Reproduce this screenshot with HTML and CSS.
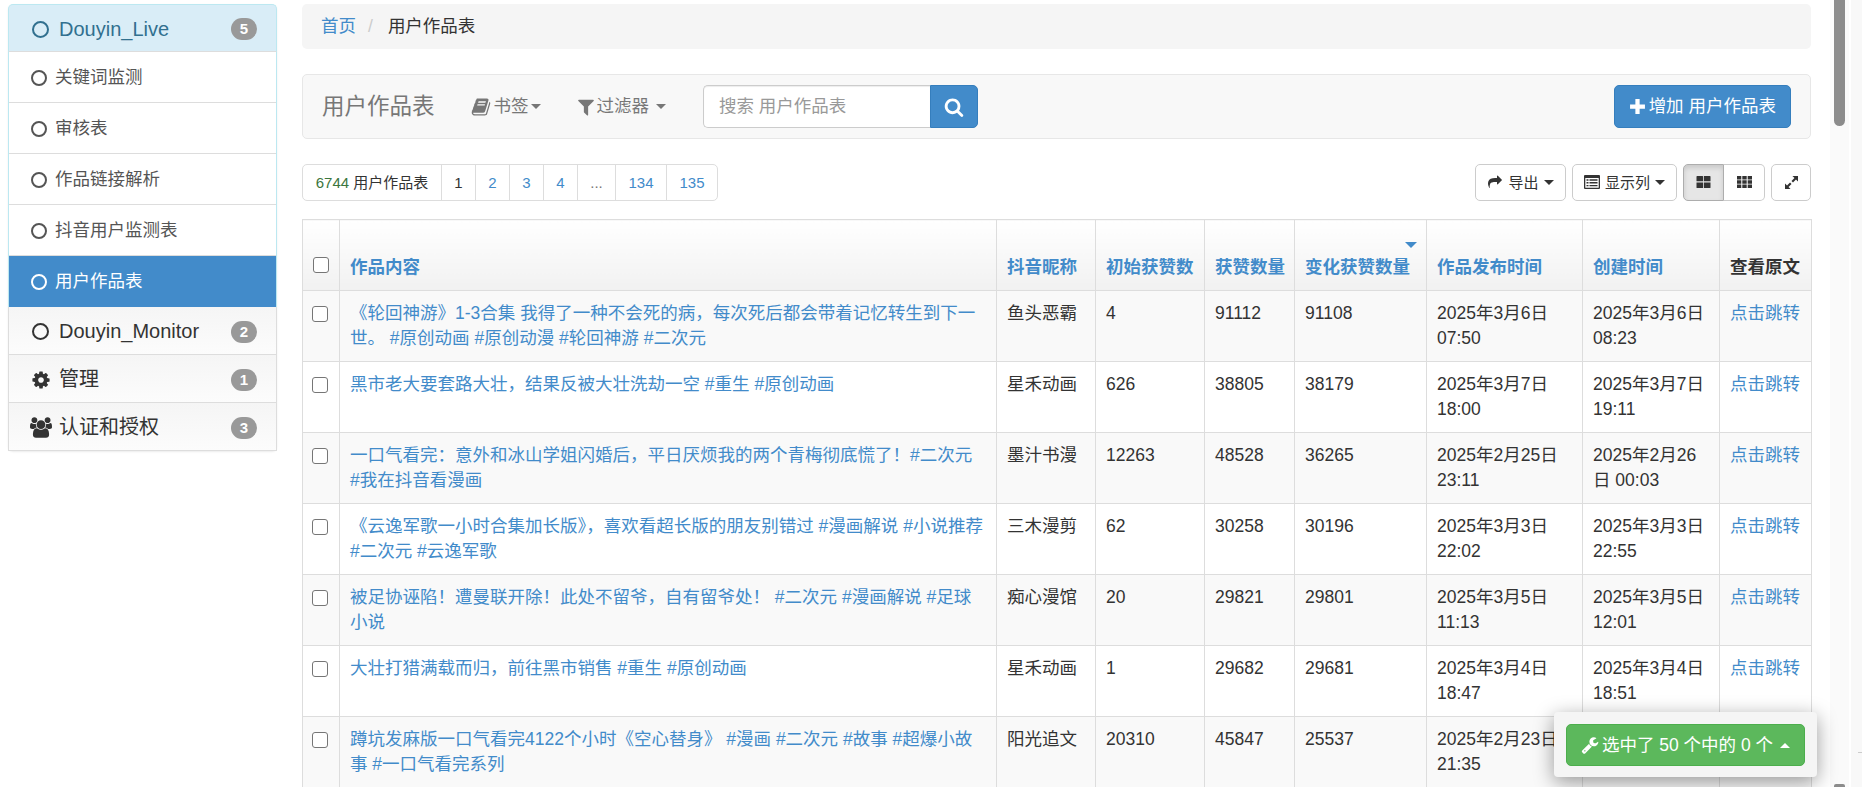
FILE: index.html
```html
<!DOCTYPE html>
<html lang="zh">
<head>
<meta charset="utf-8">
<title>用户作品表</title>
<link rel="stylesheet" href="styles.css">
</head>
<body>
<svg class="defs" width="0" height="0" aria-hidden="true">
  <symbol id="i-cog" viewBox="0 0 1792 1792"><path d="M1152 896q0-106-75-181t-181-75-181 75-75 181 75 181 181 75 181-75 75-181zm512-109v222q0 12-8 23t-20 13l-185 28q-19 54-39 91 35 50 107 138 10 12 10 25t-9 23q-27 37-99 108t-94 71q-12 0-26-9l-138-108q-44 23-91 38-16 136-29 186-7 28-36 28h-222q-14 0-24.5-8.5t-11.5-21.5l-28-184q-49-16-90-37l-141 107q-10 9-25 9-14 0-25-11-126-114-165-168-7-10-7-23 0-12 8-23 15-21 51-66.5t54-70.5q-27-50-41-99l-183-27q-13-2-21-12.5t-8-23.5v-222q0-12 8-23t19-13l186-28q14-46 39-92-40-57-107-138-10-12-10-24 0-10 9-23 26-36 98.5-107.5t94.5-71.5q13 0 26 10l138 107q44-23 91-38 16-136 29-186 7-28 36-28h222q14 0 24.5 8.5t11.5 21.5l28 184q49 16 90 37l142-107q9-9 24-9 13 0 25 10 129 119 165 170 7 8 7 22 0 12-8 23-15 21-51 66.5t-54 70.5q26 50 41 98l183 28q13 2 21 12.5t8 23.5z"/></symbol>
  <symbol id="i-users" viewBox="0 0 1920 1792"><path d="M593 896q-162 5-265 128h-134q-82 0-138-40.500t-56-118.500q0-353 124-353 6 0 43.500 21t97.500 42.500 119 21.500q67 0 133-23-5 37-5 66 0 139 81 256zm1071 637q0 120-73 189.500t-194 69.500h-874q-121 0-194-69.500t-73-189.500q0-53 3.500-103.500t14-109 26.500-108.500 43-97.500 62-81 85.500-53.500 111.500-20q10 0 43 21.500t73 48 107 48 135 21.500 135-21.500 107-48 73-48 43-21.500q61 0 111.500 20t85.500 53.500 62 81 43 97.500 26.500 108.500 14 109 3.500 103.500zm-1024-1277q0 106-75 181t-181 75-181-75-75-181 75-181 181-75 181 75 75 181zm704 384q0 159-112.500 271.500t-271.500 112.500-271.500-112.500-112.500-271.500 112.500-271.500 271.500-112.500 271.500 112.500 112.500 271.500zm576 225q0 78-56 118.500t-138 40.500h-134q-103-123-265-128 81-117 81-256 0-29-5-66 66 23 133 23 59 0 119-21.500t97.500-42.500 43.500-21q124 0 124 353zm-128-609q0 106-75 181t-181 75-181-75-75-181 75-181 181-75 181 75 75 181z"/></symbol>
  <symbol id="i-search" viewBox="0 0 1792 1792"><path d="M1216 832q0-185-131.500-316.500t-316.500-131.500-316.500 131.500-131.500 316.500 131.500 316.500 316.500 131.500 316.500-131.500 131.500-316.500zm512 832q0 52-38 90t-90 38q-54 0-90-38l-343-342q-179 124-399 124-143 0-273.500-55.500t-225-150-150-225-55.500-273.500 55.500-273.500 150-225 225-150 273.500-55.500 273.500 55.500 225 150 150 225 55.500 273.500q0 220-124 399l343 343q37 37 37 90z"/></symbol>
  <symbol id="i-filter" viewBox="0 0 1792 1792"><path d="M1595 295q17 41-14 70l-493 493v742q0 42-39 59-13 5-25 5-27 0-45-19l-256-256q-19-19-19-45v-486l-493-493q-31-29-14-70 17-39 59-39h1280q42 0 59 39z"/></symbol>
  <symbol id="i-wrench" viewBox="0 0 1792 1792"><path d="M448 1472q0-26-19-45t-45-19-45 19-19 45 19 45 45 19 45-19 19-45zm644-420l-682 682q-37 37-90 37-52 0-91-37l-106-108q-38-36-38-90 0-53 38-91l681-681q39 98 114.500 173.500t173.500 114.500zm634-435q0 39-23 106-47 134-164.500 217.500t-258.500 83.500q-185 0-316.500-131.500t-131.500-316.500 131.500-316.500 316.500-131.500q58 0 121.500 16.500t107.500 46.500q16 11 16 28t-16 28l-293 169v224l193 107q5-3 79-48.500t135.500-81 70.500-35.500q15 0 23.500 10t8.500 25z"/></symbol>
  <symbol id="i-book" viewBox="0 0 1792 1792"><path d="M1703 478q40 57 18 129l-275 906q-19 64-76.500 107.500t-122.500 43.500h-923q-77 0-148.500-53.500t-99.500-131.500q-24-67-2-127 0-4 3-27t4-37q1-8-3-21.500t-3-19.500q2-11 8-21t16.500-23.500 16.500-23.500q23-38 45-91.500t30-91.500q3-10 .5-30t-.5-28q3-11 17-28t17-23q21-36 42-92t25-90q1-9-2.500-32t.5-28q4-13 22-30.500t22-22.500q19-26 42.500-84.500t27.500-96.500q1-8-3-25.500t-2-26.500q2-8 9-18t18-23 17-21q8-12 16.500-30.500t15-35 16-36 19.500-32 26.500-23.500 36-11.500 47.500 5.500l-1 3q38-9 51-9h761q74 0 114 56t18 130l-274 906q-36 119-71.500 153.500t-128.500 34.500h-869q-27 0-38 15-11 16-1 43 24 70 144 70h923q29 0 56-15.500t35-41.500l300-987q7-22 5-57 38 15 59 43zm-1064 2q-4 13 2 22.500t20 9.500h608q13 0 25.500-9.500t16.500-22.500l21-64q4-13-2-22.500t-20-9.500h-608q-13 0-25.500 9.500t-16.500 22.500zm-83 256q-4 13 2 22.500t20 9.500h608q13 0 25.500-9.500t16.500-22.500l21-64q4-13-2-22.500t-20-9.500h-608q-13 0-25.500 9.500t-16.500 22.500z"/></symbol>
  <symbol id="i-share" viewBox="0 0 1792 1792"><path d="M1792 640q0 26-19 45l-512 512q-19 19-45 19t-45-19-19-45v-256h-224q-98 0-175.500 6t-154 21.500-133 42.500-105.500 69.500-80 101-48.500 138.500-17.500 181q0 55 5 123 0 6 2.500 23.500t2.500 26.500q0 15-8.500 25t-23.500 10q-16 0-28-17-7-9-13-22t-13.500-30-10.500-24q-127-285-127-451 0-199 53-333 162-403 875-403h224v-256q0-26 19-45t45-19 45 19l512 512q19 19 19 45z"/></symbol>
  <symbol id="i-plus" viewBox="0 0 16 16"><path d="M6 1h4v5h5v4h-5v5H6v-5H1V6h5z"/></symbol>
  <symbol id="i-list" viewBox="0 0 16 14"><path fill-rule="evenodd" d="M1 0h14a1 1 0 0 1 1 1v12a1 1 0 0 1-1 1H1a1 1 0 0 1-1-1V1a1 1 0 0 1 1-1zm.3 3v9.700h13.400V3zM2.500 4.300h2v1.400h-2zm3 0h8v1.400h-8zm-3 2.800h2v1.400h-2zm3 0h8v1.400h-8zm-3 2.800h2v1.400h-2zm3 0h8v1.400h-8z"/></symbol>
  <symbol id="i-large" viewBox="0 0 14 12"><path d="M0 .6C0 .3.300 0 .6 0h5.400c.3 0 .6.300.6.600v4.600H0zM7.400 0H13.400c.3 0 .6.300.6.600v4.600H7.400zM0 6.600h6.600v4.800c0 .3-.3.600-.6.600H.6c-.3 0-.6-.3-.6-.6zM7.400 6.600H14v4.800c0 .3-.3.600-.6.600H7.400z"/></symbol>
  <symbol id="i-th" viewBox="0 0 15 12"><path d="M0 0h4.300v3.400H0zM5.300 0h4.400v3.400H5.300zM10.700 0H15v3.400h-4.300zM0 4.300h4.300v3.400H0zM5.300 4.300h4.400v3.400H5.300zM10.700 4.300H15v3.400h-4.300zM0 8.600h4.300V12H0zM5.300 8.600h4.400V12H5.300zM10.700 8.600H15V12h-4.300z"/></symbol>
  <symbol id="i-expand" viewBox="0 0 14 14"><path d="M8 0h6v6l-2.200-2.200L8.600 7 7 5.400l3.200-3.200zM5.400 7 7 8.600l-3.200 3.200L6 14H0V8l2.200 2.200z"/></symbol>
</svg>

<div class="page">
  <aside class="sidebar">
    <a class="group group-open"><span class="ring ring-head"></span><span class="group-name">Douyin_Live</span><span class="badge">5</span></a>
    <div class="sublist">
      <a class="subitem"><span class="ring"></span>关键词监测</a>
      <a class="subitem"><span class="ring"></span>审核表</a>
      <a class="subitem"><span class="ring"></span>作品链接解析</a>
      <a class="subitem"><span class="ring"></span>抖音用户监测表</a>
      <a class="subitem subitem-active"><span class="ring"></span>用户作品表</a>
    </div>
    <a class="group"><span class="ring ring-head"></span><span class="group-name">Douyin_Monitor</span><span class="badge">2</span></a>
    <a class="group"><svg class="group-icon"><use href="#i-cog"/></svg><span class="group-name">管理</span><span class="badge">1</span></a>
    <a class="group"><svg class="group-icon group-icon-wide"><use href="#i-users"/></svg><span class="group-name">认证和授权</span><span class="badge">3</span></a>
  </aside>

  <main class="main">
    <nav class="breadcrumb"><a class="link">首页</a><span class="crumb-sep">/</span><span>用户作品表</span></nav>

    <header class="navbar">
      <span class="brand">用户作品表</span>
      <a class="nav-menu nav-menu-book"><svg class="nav-icon"><use href="#i-book"/></svg>书签<span class="caret"></span></a>
      <a class="nav-menu nav-menu-filter"><svg class="nav-icon nav-icon-filter"><use href="#i-filter"/></svg>过滤器<span class="caret caret-gap"></span></a>
      <form class="search">
        <input class="search-input" type="text" placeholder="搜索 用户作品表">
        <button class="search-btn" type="button"><svg class="search-icon"><use href="#i-search"/></svg></button>
      </form>
      <a class="add-btn"><svg class="add-icon"><use href="#i-plus"/></svg>增加 用户作品表</a>
    </header>

    <div class="toolbar">
      <ul class="pager">
        <li class="pager-count"><span class="count">6744</span> 用户作品表</li>
        <li class="pager-current">1</li>
        <li><a class="link">2</a></li>
        <li><a class="link">3</a></li>
        <li><a class="link">4</a></li>
        <li class="pager-gap">...</li>
        <li><a class="link">134</a></li>
        <li><a class="link">135</a></li>
      </ul>
      <div class="tools">
        <button class="tool tool-export" type="button"><svg class="tool-icon"><use href="#i-share"/></svg>导出<span class="caret"></span></button>
        <button class="tool tool-columns" type="button"><svg class="tool-icon"><use href="#i-list"/></svg>显示列<span class="caret"></span></button>
        <div class="view-group">
          <button class="tool view view-on" type="button"><svg class="view-icon"><use href="#i-large"/></svg></button>
          <button class="tool view view-off" type="button"><svg class="view-icon"><use href="#i-th"/></svg></button>
        </div>
        <button class="tool tool-full" type="button"><svg class="full-icon"><use href="#i-expand"/></svg></button>
      </div>
    </div>

    <table class="grid">
      <colgroup>
        <col class="c-check"><col class="c-content"><col class="c-nick"><col class="c-init"><col class="c-likes"><col class="c-change"><col class="c-pub"><col class="c-created"><col class="c-view">
      </colgroup>
      <thead>
        <tr>
          <th><input class="check" type="checkbox"></th>
          <th><a class="link">作品内容</a></th>
          <th><a class="link">抖音昵称</a></th>
          <th><a class="link">初始获赞数</a></th>
          <th><a class="link">获赞数量</a></th>
          <th class="sorted"><a class="link">变化获赞数量</a><span class="sort-mark"></span></th>
          <th><a class="link">作品发布时间</a></th>
          <th><a class="link">创建时间</a></th>
          <th>查看原文</th>
        </tr>
      </thead>
      <tbody>
        <tr>
          <td><input class="check" type="checkbox"></td>
          <td><a class="link">《轮回神游》1-3合集 我得了一种不会死的病，每次死后都会带着记忆转生到下一世。 #原创动画 #原创动漫 #轮回神游 #二次元</a></td>
          <td>鱼头恶霸</td><td>4</td><td>91112</td><td>91108</td>
          <td>2025年3月6日 07:50</td><td>2025年3月6日 08:23</td><td><a class="link">点击跳转</a></td>
        </tr>
        <tr>
          <td><input class="check" type="checkbox"></td>
          <td><a class="link">黑市老大要套路大壮，结果反被大壮洗劫一空 #重生 #原创动画</a></td>
          <td>星禾动画</td><td>626</td><td>38805</td><td>38179</td>
          <td>2025年3月7日 18:00</td><td>2025年3月7日 19:11</td><td><a class="link">点击跳转</a></td>
        </tr>
        <tr>
          <td><input class="check" type="checkbox"></td>
          <td><a class="link">一口气看完：意外和冰山学姐闪婚后，平日厌烦我的两个青梅彻底慌了！#二次元 #我在抖音看漫画</a></td>
          <td>墨汁书漫</td><td>12263</td><td>48528</td><td>36265</td>
          <td>2025年2月25日 23:11</td><td>2025年2月26日 00:03</td><td><a class="link">点击跳转</a></td>
        </tr>
        <tr>
          <td><input class="check" type="checkbox"></td>
          <td><a class="link">《云逸军歌一小时合集加长版》，喜欢看超长版的朋友别错过 #漫画解说 #小说推荐 #二次元 #云逸军歌</a></td>
          <td>三木漫剪</td><td>62</td><td>30258</td><td>30196</td>
          <td>2025年3月3日 22:02</td><td>2025年3月3日 22:55</td><td><a class="link">点击跳转</a></td>
        </tr>
        <tr>
          <td><input class="check" type="checkbox"></td>
          <td><a class="link">被足协诬陷！遭曼联开除！此处不留爷，自有留爷处！ #二次元 #漫画解说 #足球小说</a></td>
          <td>痴心漫馆</td><td>20</td><td>29821</td><td>29801</td>
          <td>2025年3月5日 11:13</td><td>2025年3月5日 12:01</td><td><a class="link">点击跳转</a></td>
        </tr>
        <tr>
          <td><input class="check" type="checkbox"></td>
          <td><a class="link">大壮打猎满载而归，前往黑市销售 #重生 #原创动画</a></td>
          <td>星禾动画</td><td>1</td><td>29682</td><td>29681</td>
          <td>2025年3月4日 18:47</td><td>2025年3月4日 18:51</td><td><a class="link">点击跳转</a></td>
        </tr>
        <tr>
          <td><input class="check" type="checkbox"></td>
          <td><a class="link">蹲坑发麻版一口气看完4122个小时《空心替身》 #漫画 #二次元 #故事 #超爆小故事 #一口气看完系列</a></td>
          <td>阳光追文</td><td>20310</td><td>45847</td><td>25537</td>
          <td>2025年2月23日 21:35</td><td>2025年2月23日 22:10</td><td><a class="link">点击跳转</a></td>
        </tr>
      </tbody>
    </table>
  </main>

  <div class="scroll-strip"><span class="thumb"></span><span class="thumb-next"></span></div>
  <div class="edge-strip"><span class="edge-tick"></span></div>
</div>

<div class="action-float">
  <button class="action-btn" type="button"><svg class="action-icon"><use href="#i-wrench"/></svg>选中了 50 个中的 0 个<span class="caret caret-up"></span></button>
</div>
</body>
</html>
```
FILE: styles.css
```css
* { box-sizing: border-box; }
html, body { margin: 0; height: 787px; overflow: hidden; background: #fff; }
body { font-family: "Liberation Sans", "Noto Sans CJK SC", sans-serif; font-size: 17.5px; line-height: 25px; color: #333; }
.defs { position: absolute; }
.link { color: #428bca; text-decoration: none; }
.page { display: flex; height: 787px; overflow: hidden; }

/* sidebar */
.sidebar { flex: none; width: 269px; margin: 4px 0 0 8px; align-self: flex-start; border-radius: 5px; box-shadow: 0 1px 2px rgba(0,0,0,.08); }
.group { display: flex; align-items: center; height: 48px; padding: 2px 19px 0 23px; border: 1px solid #ddd; border-top: 0; background: linear-gradient(#f5f5f5, #fcfcfc); font-size: 20px; color: #333; }
.group-open { background: #d9edf7; border: 1px solid #bce8f1; border-bottom: 1px solid #ddd; border-radius: 5px 5px 0 0; color: #31708f; }
.group-name { flex: 1; margin-left: 10px; }
.group-icon { width: 20px; height: 20px; margin: 0 -1.5px; fill: #333; }
.group-icon-wide { width: 22px; height: 21px; margin: 0 -3px 0 -2px; }
.badge { width: 26px; height: 22px; border-radius: 11px; background: #999; color: #fff; font-size: 15px; font-weight: 700; line-height: 22px; text-align: center; }
.ring { display: inline-block; flex: none; width: 16px; height: 16px; margin-right: 8px; border: 2.5px solid #555; border-radius: 50%; }
.ring-head { width: 17px; height: 17px; margin-right: 0; border-color: currentColor; }
.sublist { border-left: 1px solid #bce8f1; border-right: 1px solid #bce8f1; }
.subitem { display: flex; align-items: center; height: 51px; padding: 1px 0 0 22px; border-bottom: 1px solid #ddd; background: #fff; color: #555; }
.subitem-active { background: #428bca; color: #fff; border-bottom-color: #428bca; }
.subitem-active .ring { border-color: #fff; }

/* main column */
.main { flex: none; width: 1509px; margin-left: 25px; padding-top: 4px; }
.breadcrumb { display: flex; align-items: center; height: 45px; margin-bottom: 25px; padding: 0 19px; background: #f5f5f5; border-radius: 5px; }
.crumb-sep { margin: 0 15px 0 12px; color: #ccc; }
.navbar { display: flex; align-items: center; height: 65px; margin-bottom: 25px; padding: 0 19px; background: #f8f8f8; border: 1px solid #e7e7e7; border-radius: 5px; }
.brand { width: 112px; font-size: 22.5px; color: #777; white-space: nowrap; }
.nav-menu { display: flex; align-items: center; color: #777; white-space: nowrap; }
.nav-menu-book { margin-left: 37px; }
.nav-menu-filter { margin-left: 35px; }
.nav-icon { width: 20px; height: 20px; margin-right: 2.5px; fill: #777; }
.nav-icon-filter { margin-right: 1px; }
.caret { display: inline-block; width: 0; height: 0; margin-left: 2px; border-top: 5px solid currentColor; border-left: 5px solid transparent; border-right: 5px solid transparent; }
.caret-gap { margin-left: 7px; }
.caret-up { margin-left: 7px; border-top: 0; border-bottom: 5px solid currentColor; }
.search { display: flex; margin-left: 37px; }
.search-input { width: 227px; height: 43px; padding: 0 15px; border: 1px solid #ccc; border-right: 0; border-radius: 5px 0 0 5px; background: #fff; box-shadow: inset 0 1px 1px rgba(0,0,0,.075); font: inherit; color: #555; }
.search-input::placeholder { color: #999; opacity: 1; }
.search-btn { display: flex; align-items: center; justify-content: center; width: 48px; height: 43px; padding: 0; border: 1px solid #357ebd; border-radius: 0 5px 5px 0; background: #428bca; }
.search-icon { width: 20px; height: 20px; fill: #fff; }
.add-btn { display: flex; align-items: center; height: 43px; margin-left: auto; padding: 0 14px; border: 1px solid #357ebd; border-radius: 5px; background: #428bca; color: #fff; white-space: nowrap; }
.add-icon { width: 17px; height: 17px; margin-right: 3px; fill: #fff; }

/* toolbar */
.toolbar { display: flex; justify-content: space-between; height: 37px; margin-bottom: 18px; font-size: 15px; }
.pager { display: flex; margin: 0; padding: 0 0 1px; list-style: none; border: 1px solid #ddd; border-radius: 5px; background: #fff; }
.pager li { display: flex; align-items: center; justify-content: center; width: 34px; margin-bottom: -1px; padding-bottom: 1px; border-left: 1px solid #ddd; white-space: pre; }
.pager .pager-count { width: 138px; border-left: 0; }
.pager .pager-gap { width: 38px; color: #777; }
.pager li:nth-last-child(-n+2) { width: 51px; }
.pager-current { color: #333; }
.count { color: #3c763d; }
.tools { display: flex; }
.tool { display: flex; align-items: center; justify-content: center; height: 37px; padding: 0 0 1px; border: 1px solid #ccc; border-radius: 5px; background: #fff; color: #333; font: inherit; font-size: 15px; }
.tool-export { width: 91px; margin-right: 6px; }
.tool-columns { width: 105px; margin-right: 6px; }
.tool-icon { width: 16px; height: 14px; margin-right: 5px; fill: #333; }
.tool .caret { margin-left: 5px; }
.view-group { display: flex; margin-right: 6px; }
.view { width: 41px; }
.view-on { border-radius: 5px 0 0 5px; background: #e6e6e6; border-color: #adadad; box-shadow: inset 0 3px 5px rgba(0,0,0,.125); }
.view-off { border-left: 0; border-radius: 0 5px 5px 0; }
.view-icon { width: 15px; height: 12px; fill: #333; }
.tool-full { width: 40px; }
.full-icon { width: 13px; height: 13px; fill: #333; }

/* table */
.grid { width: 1509px; table-layout: fixed; border-collapse: collapse; }
.c-check { width: 37px; } .c-content { width: 657px; } .c-nick { width: 99px; } .c-init { width: 109px; } .c-likes { width: 90px; }
.c-change { width: 132px; } .c-pub { width: 156px; } .c-created { width: 137px; } .c-view { width: 92px; }
.grid th, .grid td { padding: 10px; border: 1px solid #ddd; text-align: left; vertical-align: top; }
.grid thead tr { height: 71px; }
.grid tbody tr { height: 71px; }
.grid th { position: relative; vertical-align: bottom; font-weight: 700; background: linear-gradient(#fff, #f1f1f1); white-space: nowrap; }
.grid tbody tr:nth-child(odd) { background: #f9f9f9; }
.grid th:first-child { vertical-align: middle; padding: 20px 0 0 10px; }
.grid td:first-child { padding: 6px 0 0 9px; }
.check { display: block; width: 16px; height: 16px; margin: 0; appearance: none; border: 1px solid #767676; border-radius: 3px; background: #fff; }
.grid td .check { margin-top: 9px; }
.sort-mark { position: absolute; top: 22px; right: 9px; border-top: 6px solid #428bca; border-left: 6px solid transparent; border-right: 6px solid transparent; }

/* scrollbar strips */
.scroll-strip { flex: none; width: 19px; height: 787px; margin-left: 19px; padding: 0 4px; background: #fafafa; overflow: hidden; }
.thumb { display: block; width: 11px; height: 126px; background: #8c8c8c; border-radius: 0 0 6px 6px; }
.thumb-next { display: block; width: 11px; height: 10px; margin-top: 658px; background: #8c8c8c; border-radius: 2px 2px 0 0; }
.edge-strip { flex: none; width: 11px; height: 787px; margin-left: 2px; background: #f8f8f8; padding-top: 752px; }
.edge-tick { display: block; width: 4px; height: 1px; margin-left: 7px; background: #ccc; }

/* floating action */
.action-float { position: fixed; right: 45px; bottom: 10px; width: 263px; height: 65px; padding: 12px; background: #f5f5f5; border-radius: 4px; box-shadow: 0 5px 20px rgba(0,0,0,.4); }
.action-btn { display: flex; align-items: center; justify-content: center; width: 239px; height: 42px; padding: 0; border: 1px solid #4cae4c; border-radius: 5px; background: #5cb85c; color: #fff; font: inherit; white-space: nowrap; }
.action-icon { width: 18px; height: 18px; margin-right: 3px; fill: #fff; }
```
